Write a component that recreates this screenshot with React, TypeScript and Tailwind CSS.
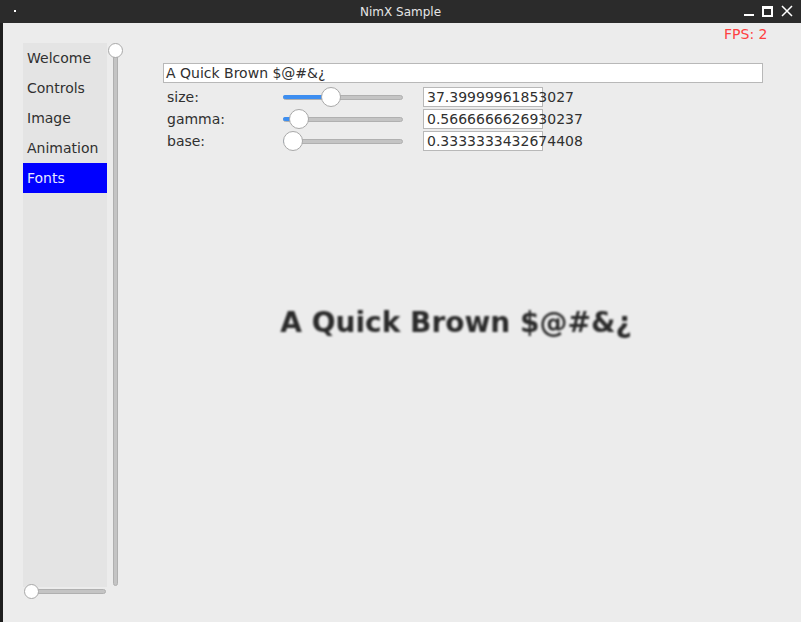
import React from "react";

const items = ["Welcome", "Controls", "Image", "Animation", "Fonts"];

function Slider({ pct }: { pct: number }) {
  return (
    <div className="relative w-[120px] h-[20px] flex items-center">
      <div className="w-full h-[5px] rounded-full bg-[#c4c4c4] border border-[#b0b0b0]" />
      <div className="absolute left-0 h-[4px] rounded-full bg-[#3d8ef0]" style={{ width: `${pct}%` }} />
      <div
        className="absolute w-[20px] h-[20px] rounded-full bg-white border border-[#a8a8a8]"
        style={{ left: `calc(${pct}% - 10px)` }}
      />
    </div>
  );
}

function Row({ label, pct, value }: { label: string; pct: number; value: string }) {
  return (
    <div className="flex items-center h-[22px]">
      <div className="w-[120px] pl-[4px]">{label}</div>
      <Slider pct={pct} />
      <div className="ml-[20px] w-[120px] h-[20px] border border-[#b8b8b8] bg-white pl-[3px] leading-[18px] whitespace-nowrap">
        {value}
      </div>
    </div>
  );
}

export default function App() {
  return (
    <div className="relative w-[801px] h-[622px] flex flex-col bg-[#ececec] text-[#303030] text-[14px] overflow-hidden" style={{ fontFamily: '"DejaVu Sans", sans-serif' }}>
      <div className="relative h-[23px] bg-[#2b2b2b] text-[#e6e6e6] text-[12px] flex items-center justify-center shrink-0">
        <div className="absolute left-[14px] top-[10px] w-[2px] h-[2px] bg-white" />
        NimX Sample
        <div className="absolute right-[8px] top-[5px] flex gap-[8px] items-center">
          <div className="w-[10px] h-[2px] bg-white mt-[8px]" />
          <div className="w-[11px] h-[11px] border-2 border-white border-t-[3px]" />
          <svg width="12" height="12" viewBox="0 0 12 12"><path d="M1 1 L11 11 M11 1 L1 11" stroke="white" strokeWidth="1.5" /></svg>
        </div>
      </div>
      <div className="flex flex-1 border-l-[3px] border-[#1e1e1e]">
        <div className="flex flex-col ml-[20px] mt-[20px]">
          <div className="flex">
            <div className="w-[84px] h-[544px] bg-[#e4e4e4] flex flex-col">
              {items.map((t) => (
                <div key={t} className={`h-[30px] leading-[30px] pl-[4px] ${t === "Fonts" ? "bg-[#0000ff] text-[#e8e8ff]" : ""}`}>{t}</div>
              ))}
            </div>
            <div className="relative ml-[6px] w-[5px] h-[536px] mt-[7px] rounded-full bg-[#c4c4c4] border border-[#b0b0b0]">
              <div className="absolute -left-[6px] -top-[8px] w-[15px] h-[15px] rounded-full bg-white border border-[#a8a8a8]" />
            </div>
          </div>
          <div className="relative mt-[2px] ml-[3px] w-[80px] h-[5px] rounded-full bg-[#c4c4c4] border border-[#b0b0b0]">
            <div className="absolute -left-[3px] -top-[6px] w-[15px] h-[15px] rounded-full bg-white border border-[#a8a8a8]" />
          </div>
        </div>
        <div className="flex-1 flex flex-col pl-[45px] pt-[40px] pr-[38px]">
          <div className="h-[20px] border border-[#b8b8b8] bg-white pl-[2px] leading-[18px]">A Quick Brown $@#&¿</div>
          <div className="mt-[3px] flex flex-col">
            <Row label="size:" pct={40} value="37.39999961853027" />
            <Row label="gamma:" pct={13} value="0.5666666626930237" />
            <Row label="base:" pct={8} value="0.3333333432674408" />
          </div>
          <div className="mt-[150px] text-center pr-[14px]">
            <span className="text-[28px] font-bold text-[#2a2a2a] blur-[0.8px]">A Quick Brown $@#&¿</span>
          </div>
        </div>
      </div>
      <div className="absolute left-[724px] top-[24px] text-[#ff4040] text-[14px]">FPS: 2</div>
    </div>
  );
}
